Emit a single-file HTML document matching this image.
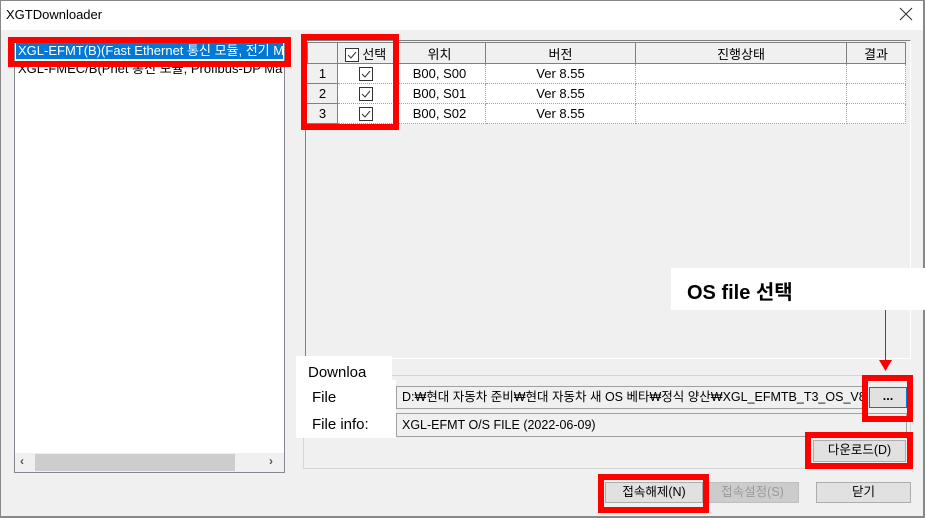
<!DOCTYPE html>
<html><head><meta charset="utf-8"><style>
*{box-sizing:border-box;margin:0;padding:0}
body{width:925px;height:518px;overflow:hidden;background:#f0f0f0;font-family:"Liberation Sans","Noto Sans CJK KR",sans-serif;font-size:13px;color:#000;position:relative}
.a{position:absolute}
.red{position:absolute;border:6px solid #f00}
.btn{position:absolute;background:#e1e1e1;border:1px solid #adadad;text-align:center;font-size:12.5px;line-height:19px}
.grid td{border-right:1px dotted #a0a0a0;border-bottom:1px dotted #a0a0a0;height:20px;text-align:center;font-size:13px;padding:0;background:#fff}
.grid th{background:#f0f0f0;border-right:1px solid #808080;border-bottom:1px solid #808080;font-weight:normal;height:21px;font-size:13px;padding:0}
.grid td.n{background:#f0f0f0;border-right:1px solid #808080;border-bottom:1px solid #808080;border-top:1px solid #fff;border-left:1px solid #fff}
.cb{display:inline-block;vertical-align:middle}
</style></head><body>
<!-- title bar -->
<div class="a" style="left:0;top:0;width:925px;height:30px;background:#fff;border-top:1px solid #888;"></div>
<div class="a" style="left:6px;top:7px;font-size:13px">XGTDownloader</div>
<svg class="a" style="left:899px;top:7px" width="14" height="14"><path d="M1 1L13 13M13 1L1 13" stroke="#333" stroke-width="1.1"/></svg>
<div class="a" style="left:0;top:0;width:1px;height:518px;background:#888"></div>
<div class="a" style="left:923px;top:0;width:2px;height:518px;background:#888"></div>
<div class="a" style="left:0;top:516px;width:925px;height:2px;background:#888"></div>

<!-- left list -->
<div class="a" style="left:14px;top:37px;width:271px;height:436px;background:#fff;border:1px solid #828790"></div>
<div class="a" style="left:16px;top:42px;width:267px;height:17px;background:#0078d7;color:#fff;line-height:17px;padding-left:2px;white-space:nowrap;overflow:hidden">XGL-EFMT(B)(Fast Ethernet 통신 모듈, 전기 M</div>
<div class="a" style="left:18px;top:60px;width:265px;height:17px;line-height:17px;white-space:nowrap;overflow:hidden">XGL-FMEC/B(Pnet 통신 모듈, Profibus-DP Mas</div>
<div class="a" style="left:15px;top:453px;width:269px;height:19px;background:#f0f0f0"></div>
<div class="a" style="left:35px;top:454px;width:200px;height:17px;background:#cdcdcd"></div>
<div class="a" style="left:20px;top:454px;font-size:12px;color:#555;font-weight:bold">‹</div>
<div class="a" style="left:269px;top:454px;font-size:12px;color:#555;font-weight:bold">›</div>

<!-- grid frame -->
<div class="a" style="left:305px;top:40px;width:606px;height:319px;border-left:1px solid #808080;border-top:1px solid #808080;border-right:1px solid #fff;border-bottom:1px solid #fff;"></div>
<table class="grid a" style="left:307px;top:42px;border-collapse:collapse;border-top:1px solid #808080;border-left:1px solid #808080">
<tr><th style="width:30px"></th><th style="width:56px"><svg class="cb" width="14" height="14"><rect x=".5" y=".5" width="13" height="13" fill="#fff" stroke="#333"/><path d="M3 7l3 3 5-6" stroke="#333" fill="none"/></svg> 선택</th><th style="width:92px">위치</th><th style="width:150px">버전</th><th style="width:211px">진행상태</th><th style="width:59px">결과</th></tr>
<tr><td class="n">1</td><td><svg class="cb" width="14" height="14"><rect x=".5" y=".5" width="13" height="13" fill="#fff" stroke="#333"/><path d="M3 7l3 3 5-6" stroke="#333" fill="none"/></svg></td><td>B00, S00</td><td>Ver 8.55</td><td></td><td></td></tr>
<tr><td class="n">2</td><td><svg class="cb" width="14" height="14"><rect x=".5" y=".5" width="13" height="13" fill="#fff" stroke="#333"/><path d="M3 7l3 3 5-6" stroke="#333" fill="none"/></svg></td><td>B00, S01</td><td>Ver 8.55</td><td></td><td></td></tr>
<tr><td class="n">3</td><td><svg class="cb" width="14" height="14"><rect x=".5" y=".5" width="13" height="13" fill="#fff" stroke="#333"/><path d="M3 7l3 3 5-6" stroke="#333" fill="none"/></svg></td><td>B00, S02</td><td>Ver 8.55</td><td></td><td></td></tr>
</table>

<!-- group box -->
<div class="a" style="left:303px;top:375px;width:608px;height:94px;border:1px solid #d5d5d5"></div>
<div class="a" style="left:296px;top:356px;width:96px;height:26px;background:#fff"></div>
<div class="a" style="left:296px;top:380px;width:100px;height:58px;background:#fff"></div>
<div class="a" style="left:308px;top:364px;font-size:15px">Downloa</div>
<div class="a" style="left:312px;top:389px;font-size:15px">File</div>
<div class="a" style="left:312px;top:416px;font-size:15px">File info:</div>
<div class="a" style="left:396px;top:386px;width:471px;height:23px;background:#f0f0f0;border:1px solid #a0a0a0;line-height:21px;padding-left:5px;font-size:12.5px;white-space:nowrap;overflow:hidden">D:₩현대 자동차 준비₩현대 자동차 새 OS 베타₩정식 양산₩XGL_EFMTB_T3_OS_V8</div>
<div class="a" style="left:396px;top:413px;width:511px;height:24px;background:#f0f0f0;border:1px solid #a0a0a0;line-height:22px;padding-left:5px;font-size:12.5px">XGL-EFMT O/S FILE (2022-06-09)</div>
<div class="btn" style="left:869px;top:387px;width:38px;height:21px;border:1px solid #0078d7;line-height:16px;font-weight:bold">...</div>
<div class="btn" style="left:813px;top:440px;width:93px;height:22px">다운로드(D)</div>

<!-- bottom buttons -->
<div class="btn" style="left:605px;top:482px;width:98px;height:21px">접속해제(N)</div>
<div class="btn" style="left:706px;top:482px;width:93px;height:21px;background:#ccc;border-color:#bfbfbf;color:#9a9a9a">접속설정(S)</div>
<div class="btn" style="left:816px;top:482px;width:95px;height:21px">닫기</div>

<!-- annotation -->
<div class="a" style="left:671px;top:268px;width:254px;height:42px;background:#fff"></div>
<div class="a" style="left:687px;top:276px;font-size:20px;font-weight:bold">OS file 선택</div>
<div class="a" style="left:885px;top:310px;width:1px;height:52px;background:#f00"></div>
<svg class="a" style="left:879px;top:360px" width="14" height="12"><path d="M0 0H13L6.5 11Z" fill="#f00"/></svg>

<!-- red boxes -->
<div class="red" style="left:8px;top:37px;width:283px;height:30px"></div>
<div class="red" style="left:301px;top:34px;width:98px;height:96px"></div>
<div class="red" style="left:862px;top:375px;width:51px;height:47px"></div>
<div class="red" style="left:805px;top:432px;width:108px;height:37px"></div>
<div class="red" style="left:598px;top:474px;width:111px;height:39px"></div>
</body></html>
